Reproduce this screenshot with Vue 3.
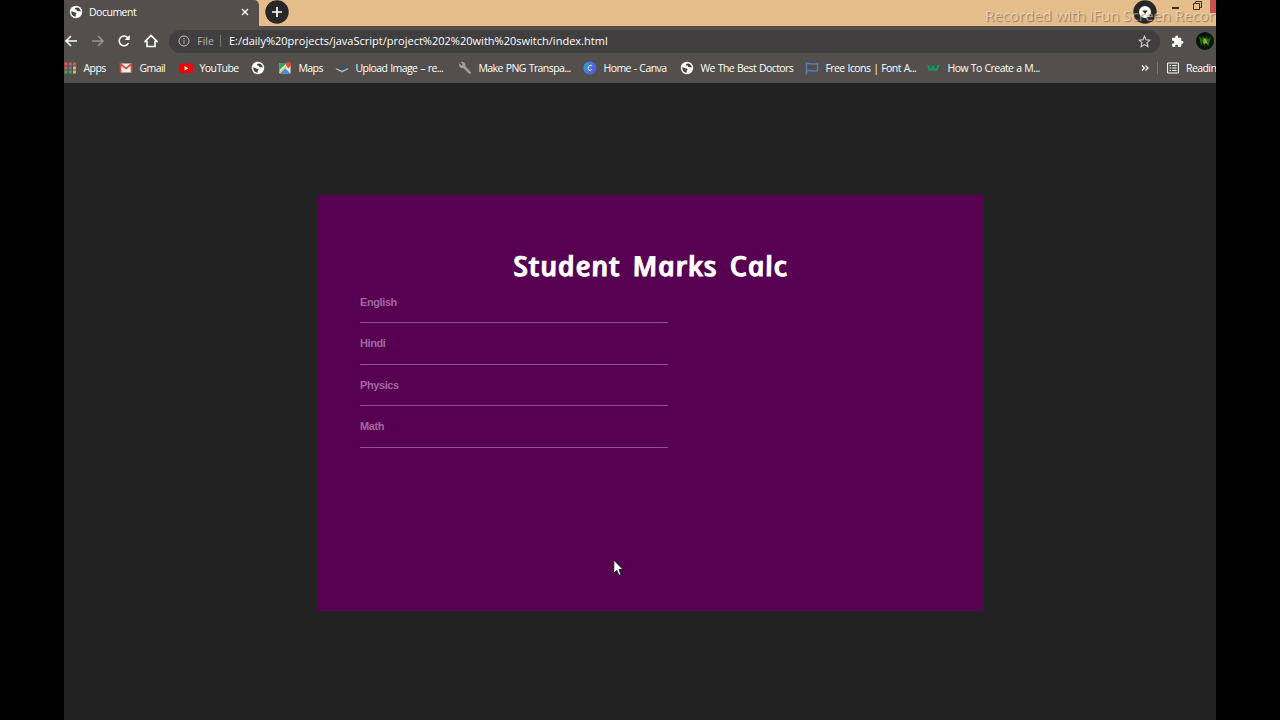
<template>
  <div class="screen">
    <div class="window">
      <div class="title-bar">
        <div class="tab">
          <svg class="icon" viewBox="0 0 14 14"><use href="#globe" /></svg>
          <span class="tab-title">Document</span>
          <svg class="tab-close" viewBox="0 0 8 8"><path d="M1 1l6 6M7 1L1 7" /></svg>
        </div>
        <div class="new-tab">
          <svg viewBox="0 0 24 24"><circle cx="12" cy="12" r="11.7" fill="#292829" /><path d="M12 7v10M7 12h10" stroke="#fff" stroke-width="1.7" /></svg>
        </div>
        <div class="window-buttons">
          <svg class="guest" viewBox="0 0 24 24">
            <circle cx="12" cy="12" r="11.7" fill="#292829" />
            <circle cx="12" cy="12" r="6" fill="#fff" />
            <path d="M9.3 10.5h5.4L12 14z" fill="#292829" />
          </svg>
          <span class="minimize"></span>
          <svg class="restore" viewBox="0 0 9 9"><path d="M.5 2.5h6v6h-6zM2.5 2.5v-2h6v6h-2" /></svg>
          <span class="close-button"></span>
        </div>
        <span class="watermark">Recorded with iFun Screen Recor</span>
      </div>

      <div class="toolbar">
        <svg class="nav" viewBox="0 0 14 14"><path d="M13 7H2M7 2L2 7l5 5" /></svg>
        <svg class="nav dim" viewBox="0 0 14 14"><path d="M1 7h11M7 2l5 5-5 5" /></svg>
        <svg class="nav" viewBox="0 0 14 14"><path d="M11.5 9A4.9 4.9 0 1 1 11 3.9" /><path d="M12.7 1v5H7.8z" fill="#fff" stroke="none" /></svg>
        <svg class="nav" viewBox="0 0 14 14"><path d="M1 7.5L7 1.5l6 6h-2v5H3v-5z" /></svg>
        <div class="address">
          <svg class="info" viewBox="0 0 12 12"><circle cx="6" cy="6" r="5" /><path d="M6 5.3v3.4M6 3.1v1.2" /></svg>
          <span class="scheme">File</span>
          <span class="divider"></span>
          <span class="url">E:/daily%20projects/javaScript/project%202%20with%20switch/index.html</span>
          <svg class="star" viewBox="0 0 12 12"><path d="M6 1l1.4 3.4 3.6.3-2.7 2.4.8 3.6L6 8.8l-3.1 1.9.8-3.6L1 4.7l3.6-.3z" /></svg>
        </div>
        <svg class="puzzle" viewBox="0 0 24 24"><path d="M20.5 11H19V7a2 2 0 0 0-2-2h-4V3.5a2.5 2.5 0 0 0-5 0V5H4a2 2 0 0 0-2 2v3.8h1.5a2.7 2.7 0 0 1 0 5.4H2V20a2 2 0 0 0 2 2h3.8v-1.5a2.7 2.7 0 0 1 5.4 0V22H17a2 2 0 0 0 2-2v-4h1.5a2.5 2.5 0 0 0 0-5z" /></svg>
        <svg class="avatar" viewBox="0 0 18 18">
          <circle cx="9" cy="9" r="9" fill="#071507" />
          <path d="M3 4l2 10 2-5 1 6 2-5 2 5 3-10-3 2-1-3-2 4-2-4-1 3z" fill="#126c18" />
          <path d="M8 6l2 1 2 5-2-1-2 1-1-2z" fill="#9ba62a" />
        </svg>
      </div>

      <div class="bookmarks">
        <div v-for="(item, index) in bookmarks" :key="index" class="bookmark" :style="{ width: item.width + 'px' }">
          <svg class="icon" viewBox="0 0 14 14"><use :href="'#' + item.icon" /></svg>
          <span v-if="item.label">{{ item.label }}</span>
        </div>
        <div class="reading">
          <svg class="more" viewBox="0 0 8 8"><path d="M1 1.5l2.5 2.5L1 6.5M4.5 1.5L7 4 4.5 6.5" /></svg>
          <span class="divider"></span>
          <svg class="list" viewBox="0 0 12 12"><path d="M.6 1h10.8v10H.6zM2.500 3.500H4M5 3.500h4.500M2.500 6H4M5 6h4.500M2.500 8.500H4M5 8.500h4.500" /></svg>
          <span>Readin</span>
        </div>
      </div>

      <main class="page">
        <section class="card">
          <h1>Student Marks Calc</h1>
          <form>
            <input v-for="subject in subjects" :key="subject" v-model="marks[subject]" type="text" :placeholder="subject" />
          </form>
        </section>
      </main>
    </div>

    <svg class="cursor" viewBox="0 0 11 18"><path d="M.8 1v13.200l3-2.800 2.100 5 2.200-.9-2.100-4.900h4z" fill="#fff" stroke="#151015" stroke-width=".9" /></svg>

    <svg class="symbols">
      <symbol id="globe" viewBox="0 0 14 14">
        <circle cx="7" cy="7" r="6.2" fill="#fff" />
        <path d="M2.300 6.300c2 .2 2.700 1.500 4.700 1.500 1 .6.300 1.500-.3 2v2C4 11.500 2 9.300 2.300 6.300zM5.800 3.400c1-1.200 3.200-1.200 4.600.2.800.9 1.300 2 1.400 3.200-1.300-1.100-2.200-.2-3.500-.8-.8-.4-.2-1.200-.8-1.400-.7-.2-1.700-.2-1.700-1.200z" fill="#45413f" />
      </symbol>
      <symbol id="apps" viewBox="0 0 14 14">
        <path d="M1.500 1.500h3v3h-3zM1.500 5.500h3v3h-3z" fill="#e3574b" /><path d="M5.700 1.500h3v3h-3z" fill="#e3574b" />
        <path d="M1.500 9.500h3v3h-3zM5.700 9.500h3v3h-3z" fill="#46a35d" /><path d="M5.700 5.500h3v3h-3z" fill="#4b83d5" />
        <path d="M10 1.500h3v3h-3z" fill="#e3574b" /><path d="M10 5.500h3v3h-3zM10 9.500h3v3h-3z" fill="#e7b73f" />
      </symbol>
      <symbol id="gmail" viewBox="0 0 14 14">
        <path d="M1.500 2.500h11v9h-11z" fill="#f3eeee" /><path d="M1.500 11.500V3L7 7.500 12.500 3v8.500" fill="none" stroke="#dc4437" stroke-width="1.7" />
      </symbol>
      <symbol id="youtube" viewBox="0 0 14 14">
        <rect x="0" y="2.500" width="14" height="9.500" rx="2" fill="#f50000" /><path d="M5.600 5v4.500L9.300 7.200z" fill="#fff" />
      </symbol>
      <symbol id="maps" viewBox="0 0 14 14">
        <path d="M1.500 2h11v10.500h-11z" fill="#e8e9e7" /><path d="M1.500 2H9L1.500 9z" fill="#27a661" /><path d="M1.500 12.500L7 7l5.500 5.500z" fill="#418be9" /><path d="M1.500 12l7-7" stroke="#f6ca3e" stroke-width="1.5" />
        <path d="M10.500 7.500C8.500 5 8 4.300 8 3.200a2.500 2.500 0 0 1 5 0c0 1.100-.7 2-2.500 4.300z" fill="#e04636" />
      </symbol>
      <symbol id="layers" viewBox="0 0 14 14">
        <path d="M.8 6L7 3.200 13.200 6 7 9z" fill="#43505b" /><path d="M.8 7L7 9.700 13.200 7v1.300L7 11.400.8 8.300z" fill="#a9bdc9" />
      </symbol>
      <symbol id="wrench" viewBox="0 0 14 14">
        <path d="M1.200 2.200L3.500 4.500l1.200-1.200L2.600 1C5.500.2 8 2.300 7.400 5.300l5.400 5.600c.8 1-.8 2.600-1.800 1.800L5.500 7.200C2.500 8 .3 5.200 1.200 2.200z" fill="#a19d9a" />
      </symbol>
      <symbol id="canva" viewBox="0 0 14 14">
        <linearGradient id="canva-fill" x2="1" y2=".4"><stop stop-color="#27a6d6" /><stop offset="1" stop-color="#5a55dc" /></linearGradient>
        <circle cx="7" cy="7" r="6.6" fill="url(#canva-fill)" /><path d="M8.800 5.300c-.2-2.100-3.500-1-3.500 2 0 2.800 2.600 2.500 3.600.9" fill="none" stroke="#fff" />
      </symbol>
      <symbol id="flag" viewBox="0 0 14 14">
        <path d="M1.500 1v12.500M1.500 2.500c3.500-.5 5 1.700 11 0v7c-4.500 1.700-6-.5-11 0" fill="none" stroke="#4d80bd" stroke-width="1.5" />
      </symbol>
      <symbol id="wave" viewBox="0 0 14 14">
        <path d="M1.500 4C1.500 10 5.500 11 6.300 4.500 6.500 10.500 10.500 11 11 4" fill="none" stroke="#16975f" stroke-width="2.2" /><circle cx="12.9" cy="4" r=".6" fill="#16975f" />
      </symbol>
    </svg>
  </div>
</template>

<script setup>
import { reactive } from 'vue'

const bookmarks = [
  { icon: 'apps', label: 'Apps', width: 56 },
  { icon: 'gmail', label: 'Gmail', width: 60 },
  { icon: 'youtube', label: 'YouTube', width: 72 },
  { icon: 'globe', label: '', width: 27 },
  { icon: 'maps', label: 'Maps', width: 57 },
  { icon: 'layers', label: 'Upload Image – re...', width: 123 },
  { icon: 'wrench', label: 'Make PNG Transpa...', width: 125 },
  { icon: 'canva', label: 'Home - Canva', width: 97 },
  { icon: 'globe', label: 'We The Best Doctors', width: 125 },
  { icon: 'flag', label: 'Free Icons | Font A...', width: 122 },
  { icon: 'wave', label: 'How To Create a M...', width: 125 },
]

const subjects = ['English', 'Hindi', 'Physics', 'Math']

const marks = reactive({ English: '', Hindi: '', Physics: '', Math: '' })
</script>

<style>
body {
  background: #000;
  overflow: hidden;
}
</style>

<style scoped>
.screen {
  position: relative;
  width: 1280px;
  height: 720px;
  background: #000;
  overflow: hidden;
  font-family: "Open Sans", sans-serif;
  font-size: 10.5px;
  color: #fff;
}
.window {
  width: 1152px;
  height: 720px;
  margin: 0 auto;
  display: flex;
  flex-direction: column;
  overflow: hidden;
}
svg {
  display: block;
  flex: none;
}
.icon {
  width: 14px;
  height: 14px;
}
.title-bar {
  position: relative;
  display: flex;
  height: 26px;
  background: #e4bd8b;
  flex: none;
}
.tab {
  display: flex;
  align-items: center;
  box-sizing: border-box;
  width: 195px;
  height: 26px;
  padding: 0 10px 2px 5px;
  background: #534f4c;
  border-radius: 0 5px 0 0;
}
.tab-title {
  margin-left: 6px;
  flex: 1;
  letter-spacing: -0.5px;
}
.tab-close {
  width: 8px;
  height: 8px;
  fill: none;
  stroke: #fff;
  stroke-width: 1.3;
}
.new-tab {
  margin-left: 6px;
}
.new-tab svg,
.guest {
  width: 24px;
  height: 24px;
}
.window-buttons {
  display: flex;
  margin-left: auto;
}
.minimize {
  width: 7px;
  height: 2px;
  margin: 7px 14px 0 15px;
  background: #3b3026;
}
.restore {
  width: 9px;
  height: 9px;
  margin-top: 1px;
  fill: none;
  stroke: #3b3026;
}
.close-button {
  width: 6px;
  height: 13px;
  margin-left: 8px;
  background: #c9504f;
}
.watermark {
  position: absolute;
  left: 921px;
  top: 5px;
  font-size: 15px;
  line-height: 20px;
  white-space: nowrap;
  color: rgba(255, 240, 222, 0.5);
  text-shadow: 1px 1px 1px rgba(80, 60, 40, 0.5);
}
.toolbar {
  display: flex;
  align-items: center;
  height: 30px;
  background: #534f4c;
  flex: none;
}
.nav {
  width: 14px;
  height: 14px;
  margin-right: 12.7px;
  fill: none;
  stroke: #fff;
  stroke-width: 1.6;
}
.nav.dim {
  stroke: #969391;
}
.address {
  display: flex;
  align-items: center;
  box-sizing: border-box;
  width: 991px;
  height: 23px;
  margin-left: -2px;
  padding: 0 9px;
  border-radius: 12px;
  background: #403e3e;
}
.info {
  width: 12px;
  height: 12px;
  fill: none;
  stroke: #c3c1c0;
}
.scheme {
  margin-left: 7.5px;
  color: #b4b1b0;
}
.divider {
  width: 1px;
  height: 12px;
  background: #797573;
}
.address .divider {
  margin: 0 7.5px 0 6.5px;
}
.url {
  flex: 1;
  padding-bottom: 1px;
  font-size: 11px;
  letter-spacing: 0.01px;
  white-space: nowrap;
}
.star {
  width: 13px;
  height: 13px;
  fill: none;
  stroke: #d9d7d6;
}
.puzzle {
  width: 13px;
  height: 13px;
  margin-left: 11px;
  fill: #fff;
}
.avatar {
  width: 18px;
  height: 18px;
  margin-left: 12px;
}
.bookmarks {
  display: flex;
  align-items: center;
  height: 27px;
  padding-bottom: 3px;
  box-sizing: border-box;
  background: #534f4c;
  letter-spacing: -0.58px;
  word-spacing: 0.7px;
  white-space: nowrap;
  flex: none;
}
.bookmark {
  display: flex;
  align-items: center;
  gap: 6.5px;
  flex: none;
}
.bookmark:first-child {
  margin-left: -1px;
}
.reading {
  display: flex;
  align-items: center;
  margin-left: 89px;
}
.more {
  width: 8px;
  height: 8px;
  margin-right: 8px;
  fill: none;
  stroke: #fff;
  stroke-width: 1.2;
}
.list {
  width: 12px;
  height: 12px;
  margin: 0 7px 0 9px;
  fill: none;
  stroke: #fff;
}
.page {
  flex: 1;
  background: #222;
}
.card {
  box-sizing: border-box;
  width: 665px;
  height: 416px;
  margin: 112px 0 0 254px;
  padding: 50px 42px 0;
  border-right: 1px solid #4c0a48;
  background: #570052;
}
h1 {
  margin: 0;
  font-family: "Comic Sans MS", "Open Sans", sans-serif;
  font-size: 27.5px;
  font-style: italic;
  font-weight: 600;
  line-height: 42px;
  letter-spacing: 0.6px;
  word-spacing: 4px;
  text-align: center;
  white-space: nowrap;
  -webkit-text-stroke: 0.9px #fff;
  transform: scaleX(1.05) skewX(11deg);
}
form {
  display: flex;
  flex-direction: column;
  gap: 12.5px;
  width: 308px;
  padding-top: 7px;
}
input {
  box-sizing: border-box;
  height: 29px;
  padding: 0 0 13px;
  margin: 0;
  border: 0;
  border-bottom: 1px solid #8d568a;
  outline: 0;
  background: transparent;
  font: 700 11px "Liberation Sans", Arial, sans-serif;
  letter-spacing: -0.4px;
  color: #fff;
}
input::placeholder {
  color: #a268a0;
  opacity: 1;
}
.cursor {
  position: absolute;
  left: 613px;
  top: 559px;
  width: 11px;
  height: 18px;
}
.symbols {
  position: absolute;
  width: 0;
  height: 0;
}
</style>
